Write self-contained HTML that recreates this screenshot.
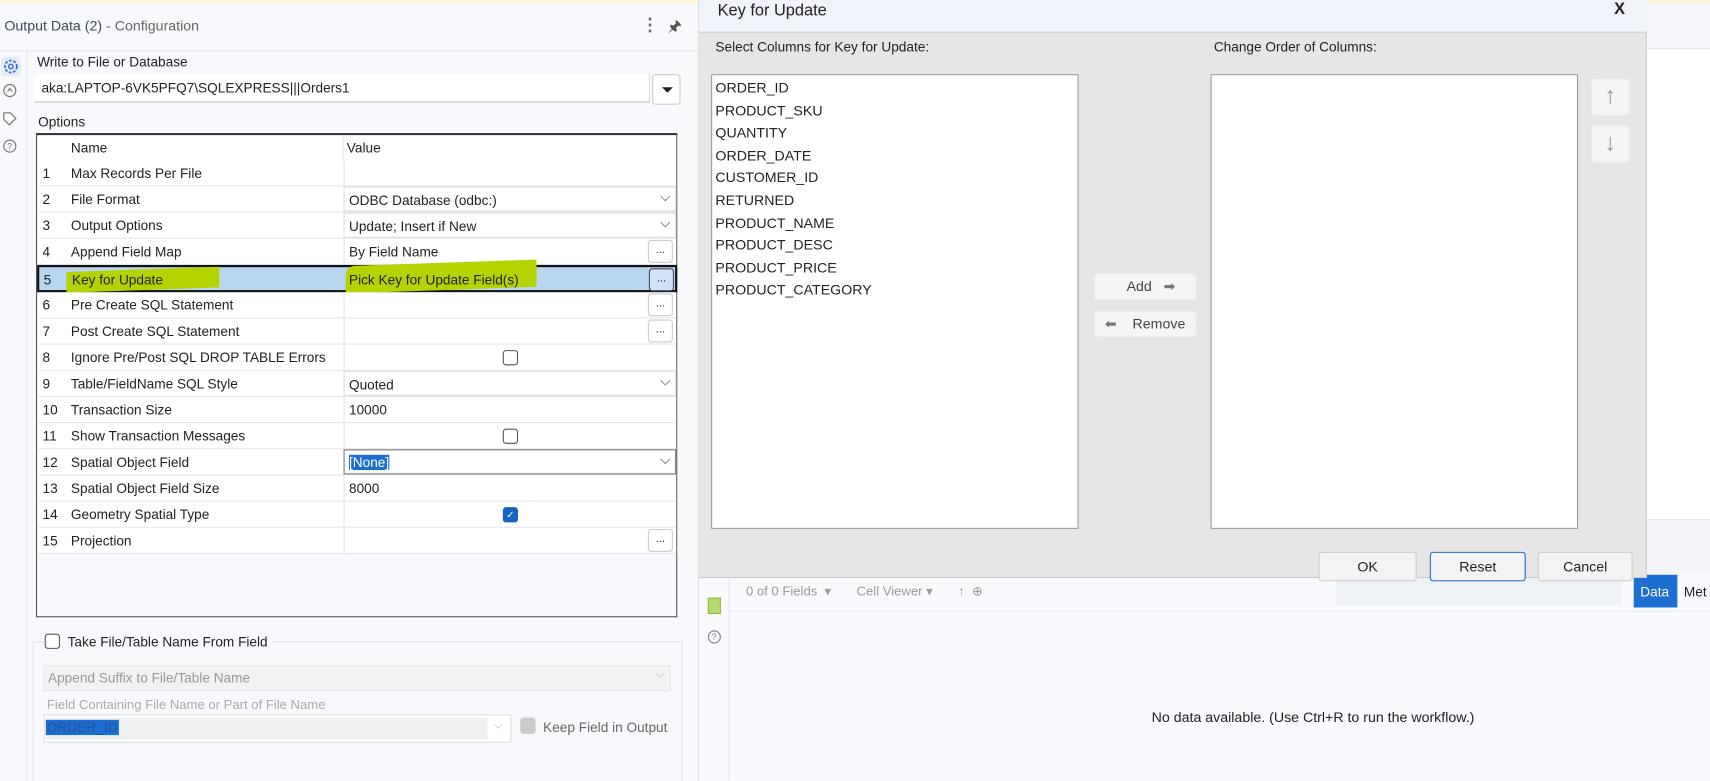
<!DOCTYPE html>
<html><head><meta charset="utf-8"><style>
*{box-sizing:border-box;margin:0;padding:0}
html,body{width:1710px;height:781px;overflow:hidden;background:#f7f9fc;font-family:"Liberation Sans",sans-serif;font-size:12.5px;color:#222}
#w{position:absolute;left:0;top:0;width:1568px;height:716px;transform:scale(1.0906);transform-origin:0 0;background:#f7f9fc}
.a{position:absolute}
.t{position:absolute;white-space:nowrap}
.row{position:absolute;left:35px;width:585px;height:24px;border-bottom:1px solid #e2e4e8;background:#fff}
.row .n{position:absolute;left:4px;top:5px}
.row .nm{position:absolute;left:30px;top:5px}
.row .v{position:absolute;left:280px;top:0;width:305px;height:23px;border-left:1px solid #e2e4e8}
.row .v span{position:absolute;left:4px;top:5px}
.chev{position:absolute;right:5px;top:4px;width:8px;height:8px;border-right:1.3px solid #777;border-bottom:1.3px solid #777;transform:rotate(45deg) scale(.8)}
.dots{position:absolute;right:3px;top:1px;width:23px;height:21px;border:1px solid #c8ccd2;border-radius:3px;background:#fff;font-size:10px;text-align:center;line-height:17px}
.cb{position:absolute;left:145px;top:5px;width:14px;height:14px;border:1.3px solid #555;border-radius:3px;background:#fff}
.btn{position:absolute;background:#f5f5f5;border:1px solid #ddd;border-radius:3px;text-align:center;font-size:13px}
.li{position:absolute;left:4px}
</style></head><body><div id="w">
<div class="a" style="left:0;top:0;width:1568px;height:3px;background:#fbf6d2"></div>
<div class="a" style="left:0;top:46px;width:640px;height:1px;background:#e3e7ee"></div>
<div class="t" style="left:4px;top:16px;font-size:13px;color:#444"><b style="font-weight:normal;color:#3b4a5a">Output Data (2)</b> <span style="color:#666">- Configuration</span></div>
<div class="t" style="left:588px;top:13px;color:#666;font-size:16px;font-weight:bold">⋮</div>
<div class="t" style="left:612px;top:14px;color:#555;font-size:14px">🖈</div>
<div class="a" style="left:24px;top:47px;width:1px;height:669px;background:#e3e7ee"></div>
<div class="a" style="left:1px;top:52px;width:18px;height:18px;background:#e4ebf7;border-radius:3px"></div>
<svg class="a" style="left:2px;top:53px" width="16" height="16" viewBox="0 0 16 16"><circle cx="8" cy="8" r="5.5" fill="none" stroke="#2a6fcf" stroke-width="1.6" stroke-dasharray="2.5 1.5"/><circle cx="8" cy="8" r="2" fill="none" stroke="#2a6fcf" stroke-width="1.3"/></svg>
<svg class="a" style="left:2px;top:76px" width="14" height="14"><circle cx="7" cy="7" r="5.5" fill="none" stroke="#777" stroke-width="1.1"/><path d="M5 8l2-3 2 3" fill="none" stroke="#777"/></svg>
<svg class="a" style="left:2px;top:102px" width="14" height="14"><path d="M1.5 1.5h6l5 5-6 6-5-5z" fill="none" stroke="#777" stroke-width="1.1"/></svg>
<svg class="a" style="left:2px;top:127px" width="14" height="14"><circle cx="7" cy="7" r="5.5" fill="none" stroke="#777" stroke-width="1.1"/><text x="4.5" y="10" font-size="8" fill="#777" font-family="Liberation Sans">?</text></svg>
<div class="t" style="left:34px;top:50px">Write to File or Database</div>
<div class="a" style="left:32px;top:68px;width:564px;height:26px;background:#fff;border-bottom:1px solid #bbb;border-right:1px solid #ddd"></div>
<div class="t" style="left:38px;top:74px">aka:LAPTOP-6VK5PFQ7\SQLEXPRESS|||Orders1</div>
<div class="a" style="left:598px;top:68px;width:26px;height:28px;background:#fff;border:1px solid #ccc;border-radius:3px"></div>
<div class="a" style="left:607px;top:80px;border-left:5px solid transparent;border-right:5px solid transparent;border-top:5px solid #222"></div>
<div class="t" style="left:35px;top:105px">Options</div>
<div class="a" style="left:33px;top:122px;width:588px;height:444px;border:1.5px solid #555;border-top:2px solid #333;background:#f7f9fc"></div>
<div class="a" style="left:35px;top:124px;width:585px;height:23px;background:#fff"><span class="t" style="left:30px;top:5px">Name</span><span class="t" style="left:283px;top:5px">Value</span><div class="a" style="left:279px;top:0;width:1px;height:23px;background:#e2e4e8"></div></div>
<div class="row" style="top:147px"><span class="n">1</span><span class="nm">Max Records Per File</span><div class="v"></div></div>
<div class="row" style="top:171px"><span class="n">2</span><span class="nm">File Format</span><div class="v" style="border:1px solid #ddd"><span>ODBC Database (odbc:)</span><i class="chev"></i></div></div>
<div class="row" style="top:195px"><span class="n">3</span><span class="nm">Output Options</span><div class="v" style="border:1px solid #ddd"><span>Update; Insert if New</span><i class="chev"></i></div></div>
<div class="row" style="top:219px"><span class="n">4</span><span class="nm">Append Field Map</span><div class="v"><span>By Field Name</span><div class="dots">...</div></div></div>
<div class="row" style="top:243px;background:#b8d6f0;border:2px solid #111;left:34px;width:587px;height:25px">
<div class="a" style="left:25px;top:2px;width:140px;height:19px;background:#b5d300;transform:skewY(-2deg)"></div>
<div class="a" style="left:281px;top:-4px;width:175px;height:25px;background:#b5d300;border-radius:8px 2px 2px 2px;transform:skewY(-2deg)"></div>
<span class="n">5</span><span class="nm">Key for Update</span><div class="v" style="border-left:none"><span>Pick Key for Update Field(s)</span><div class="dots" style="background:#cfe3f5;border-color:#446">...</div></div></div>
<div class="row" style="top:268px"><span class="n">6</span><span class="nm">Pre Create SQL Statement</span><div class="v"><div class="dots">...</div></div></div>
<div class="row" style="top:292px"><span class="n">7</span><span class="nm">Post Create SQL Statement</span><div class="v"><div class="dots">...</div></div></div>
<div class="row" style="top:316px"><span class="n">8</span><span class="nm">Ignore Pre/Post SQL DROP TABLE Errors</span><div class="v"><i class="cb"></i></div></div>
<div class="row" style="top:340px"><span class="n">9</span><span class="nm">Table/FieldName SQL Style</span><div class="v" style="border:1px solid #ddd"><span>Quoted</span><i class="chev"></i></div></div>
<div class="row" style="top:364px"><span class="n">10</span><span class="nm">Transaction Size</span><div class="v"><span>10000</span></div></div>
<div class="row" style="top:388px"><span class="n">11</span><span class="nm">Show Transaction Messages</span><div class="v"><i class="cb"></i></div></div>
<div class="row" style="top:412px"><span class="n">12</span><span class="nm">Spatial Object Field</span><div class="v" style="border:1px solid #777"><span style="background:#1a6fd0;color:#fff;top:4px">[None]</span><i class="chev"></i></div></div>
<div class="row" style="top:436px"><span class="n">13</span><span class="nm">Spatial Object Field Size</span><div class="v"><span>8000</span></div></div>
<div class="row" style="top:460px"><span class="n">14</span><span class="nm">Geometry Spatial Type</span><div class="v"><i class="cb" style="background:#1565c0;border-color:#1565c0;color:#fff;font-size:9px;text-align:center;line-height:12px;font-style:normal">✓</i></div></div>
<div class="row" style="top:484px"><span class="n">15</span><span class="nm">Projection</span><div class="v"><div class="dots">...</div></div></div>
<div class="a" style="left:30px;top:588px;width:596px;height:128px;border:1px solid #dfe3e8;border-bottom:none"></div>
<div class="a" style="left:40px;top:580px;width:210px;height:18px;background:#f7f9fc"></div>
<div class="a" style="left:41px;top:581px;width:14px;height:14px;border:1.3px solid #555;border-radius:3px;background:#fff"></div>
<div class="t" style="left:62px;top:582px">Take File/Table Name From Field</div>
<div class="a" style="left:40px;top:610px;width:575px;height:24px;background:#f1f2f4;border:1px solid #e4e6ea"></div>
<div class="t" style="left:44px;top:615px;color:#999">Append Suffix to File/Table Name</div>
<div class="t" style="left:601px;top:613px;color:#aaa;font-size:10px">⌵</div>
<div class="t" style="left:43px;top:639px;color:#aaa;font-size:12px">Field Containing File Name or Part of File Name</div>
<div class="a" style="left:40px;top:655px;width:429px;height:26px;background:#fff;border:1px solid #ddd"></div>
<div class="a" style="left:42px;top:658px;width:405px;height:20px;background:#efefef"></div>
<div class="t" style="left:42px;top:660px;background:#1a6fd0;color:#2a4fa0;padding:0 1px">ORDER_ID</div>
<div class="t" style="left:453px;top:660px;color:#aaa;font-size:10px">⌵</div>
<div class="a" style="left:477px;top:658px;width:14px;height:15px;background:#ccc;border-radius:3px"></div>
<div class="t" style="left:498px;top:660px;color:#666">Keep Field in Output</div>
<div class="a" style="left:640px;top:0;width:1px;height:716px;background:#dde1e6"></div>
<div class="a" style="left:1510px;top:3px;width:58px;height:42px;background:#f5f7fb;border-bottom:1px solid #e3e7ee"></div>
<div class="a" style="left:1510px;top:46px;width:58px;height:430px;background:#fff"></div>
<div class="a" style="left:1510px;top:476px;width:58px;height:50px;background:#f3f5f8;border-top:1px solid #e0e3e8"></div>
<div class="a" style="left:641px;top:530px;width:927px;height:186px;background:#f8fafd"></div>
<div class="a" style="left:668px;top:530px;width:1px;height:186px;background:#e3e7ee"></div>
<div class="a" style="left:669px;top:560px;width:899px;height:1px;background:#e8ebf0"></div>
<div class="t" style="left:684px;top:535px;color:#999;font-size:12px">0 of 0 Fields &nbsp;▾&nbsp;&nbsp;&nbsp;&nbsp;&nbsp;&nbsp; Cell Viewer ▾ &nbsp;&nbsp;&nbsp;&nbsp;&nbsp; ↑ &nbsp;⊕</div>
<div class="a" style="left:1225px;top:530px;width:262px;height:25px;background:#eef1f6"></div>
<div class="a" style="left:1498px;top:527px;width:40px;height:30px;background:#1a6fd0"></div>
<div class="t" style="left:1504px;top:536px;color:#fff">Data</div>
<div class="t" style="left:1544px;top:536px">Met</div>
<div class="a" style="left:649px;top:548px;width:12px;height:15px;background:#b8db70;border:1px solid #8fb84a"></div>
<svg class="a" style="left:648px;top:577px" width="14" height="14"><circle cx="7" cy="7" r="5.5" fill="none" stroke="#888" stroke-width="1.1"/><text x="4.5" y="10" font-size="8" fill="#888" font-family="Liberation Sans">?</text></svg>
<div class="t" style="left:1056px;top:650px;font-size:13px">No data available. (Use Ctrl+R to run the workflow.)</div>
<div class="a" style="left:641px;top:0;width:869px;height:530px;background:#e6e6e6;border-right:1px solid #ccc;border-bottom:1px solid #ccc"></div>
<div class="a" style="left:641px;top:0;width:869px;height:30px;background:#f0f3f9;border-bottom:1px solid #c8ccd2"></div>
<div class="t" style="left:658px;top:1px;font-size:15px;color:#222">Key for Update</div>
<div class="t" style="left:1480px;top:0px;font-size:15px;font-weight:bold">X</div>
<div class="t" style="left:656px;top:36px;font-size:12.5px">Select Columns for Key for Update:</div>
<div class="t" style="left:1113px;top:36px;font-size:12.5px">Change Order of Columns:</div>
<div class="a" style="left:652px;top:68px;width:337px;height:417px;background:#fff;border:1px solid #999"></div>
<div class="a" style="left:1110px;top:68px;width:337px;height:417px;background:#fff;border:1px solid #999"></div>
<div class="a" style="left:653px;top:71px;font-size:13px;line-height:20.6px">
<div style="padding-left:3px">ORDER_ID<br>PRODUCT_SKU<br>QUANTITY<br>ORDER_DATE<br>CUSTOMER_ID<br>RETURNED<br>PRODUCT_NAME<br>PRODUCT_DESC<br>PRODUCT_PRICE<br>PRODUCT_CATEGORY</div></div>
<div class="btn" style="left:1459px;top:72px;width:35px;height:34px;border-color:#eee;color:#999;font-size:22px;line-height:30px">↑</div>
<div class="btn" style="left:1459px;top:115px;width:35px;height:34px;border-color:#eee;color:#999;font-size:22px;line-height:30px">↓</div>
<div class="btn" style="left:1003px;top:251px;width:94px;height:24px;border-color:#eee;line-height:22px;color:#444">&nbsp;&nbsp;&nbsp;Add &nbsp;&nbsp;<span style="color:#777">➡</span></div>
<div class="btn" style="left:1003px;top:285px;width:94px;height:24px;border-color:#eee;line-height:22px;color:#444"><span style="color:#777">⬅</span>&nbsp;&nbsp;&nbsp; Remove</div>
<div class="btn" style="left:1209px;top:506px;width:90px;height:27px;line-height:25px;background:#f3f3f3;border-color:#ccc">OK</div>
<div class="btn" style="left:1311px;top:506px;width:88px;height:27px;line-height:25px;background:#f3f3f3;border:1.5px solid #1a6fd0">Reset</div>
<div class="btn" style="left:1410px;top:506px;width:87px;height:27px;line-height:25px;background:#f3f3f3;border-color:#ccc">Cancel</div>
</div></body></html>
